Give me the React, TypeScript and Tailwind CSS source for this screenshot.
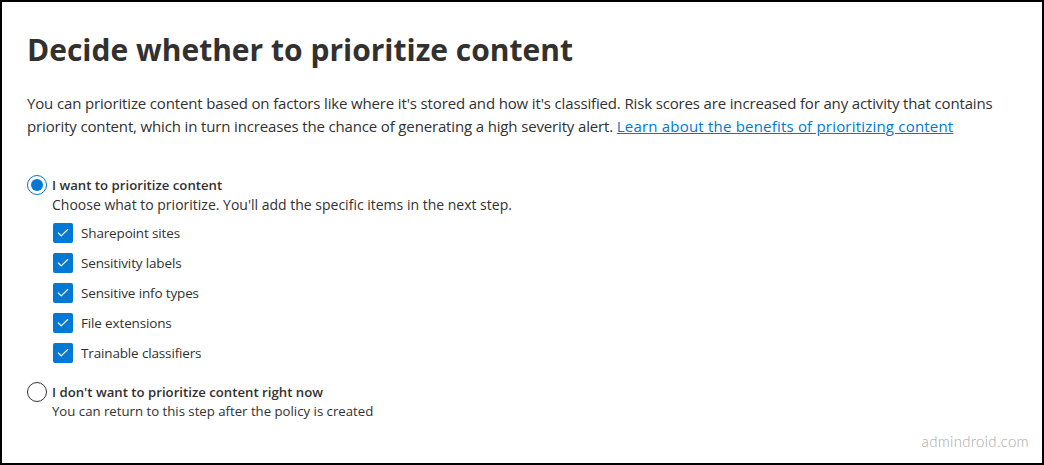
import { Check } from 'lucide-react'

const items = [
  'Sharepoint sites',
  'Sensitivity labels',
  'Sensitive info types',
  'File extensions',
  'Trainable classifiers',
]

function Radio({ checked }: { checked: boolean }) {
  return (
    <span
      className={`w-[20px] h-[20px] rounded-full border flex items-center justify-center shrink-0 ${
        checked ? 'border-[#0078d4]' : 'border-[#323130]'
      }`}
    >
      {checked && <span className="w-[12px] h-[12px] rounded-full bg-[#0078d4]" />}
    </span>
  )
}

export default function App() {
  return (
    <div
      className="w-[1044px] h-[465px] border-2 border-black bg-white text-[#323130] relative"
      style={{ fontFamily: '"Open Sans", "Noto Sans", sans-serif' }}
    >
      <div className="pl-[25px] pt-[28px]">
        <h1 className="text-[30px] font-bold leading-[40px]">
          Decide whether to prioritize content
        </h1>
        <p className="mt-[22px] text-[15px] leading-[23px] pr-[16px] tracking-[-0.15px]">
          You can prioritize content based on factors like where it's stored and how it's classified. Risk scores are
          increased for any activity that contains priority content, which in turn increases the chance of generating a
          high severity alert.{' '}
          <a href="#" className="text-[#0078d4] underline tracking-[0.2px]">
            Learn about the benefits of prioritizing content
          </a>
        </p>

        <div className="mt-[37px] flex items-center gap-[5px]">
          <Radio checked />
          <span className="text-[13.2px] font-semibold leading-[20px]">I want to prioritize content</span>
        </div>
        <div className="pl-[25px] text-[14px] leading-[20px]">
          Choose what to prioritize. You'll add the specific items in the next step.
        </div>

        <div className="pl-[26px] mt-[3px] flex flex-col">
          {items.map(item => (
            <label key={item} className="flex items-center gap-[8px] h-[30px]">
              <span className="w-[20px] h-[20px] rounded-[2px] bg-[#0078d4] flex items-center justify-center">
                <Check className="w-[14px] h-[14px] text-white" strokeWidth={2} />
              </span>
              <span className="text-[13.5px] tracking-[-0.15px]">{item}</span>
            </label>
          ))}
        </div>

        <div className="mt-[14px] flex items-center gap-[5px]">
          <Radio checked={false} />
          <span className="text-[13.2px] font-semibold leading-[20px]">I don't want to prioritize content right now</span>
        </div>
        <div className="pl-[25px] text-[13.2px] leading-[18px]">
          You can return to this step after the policy is created
        </div>
      </div>
      <span
        className="absolute right-[13px] bottom-[11px] text-[15px] font-light text-[#a8a8a8] tracking-[0.3px]"
        style={{ fontFamily: 'Lato, sans-serif' }}
      >
        admindroid.com
      </span>
    </div>
  )
}
